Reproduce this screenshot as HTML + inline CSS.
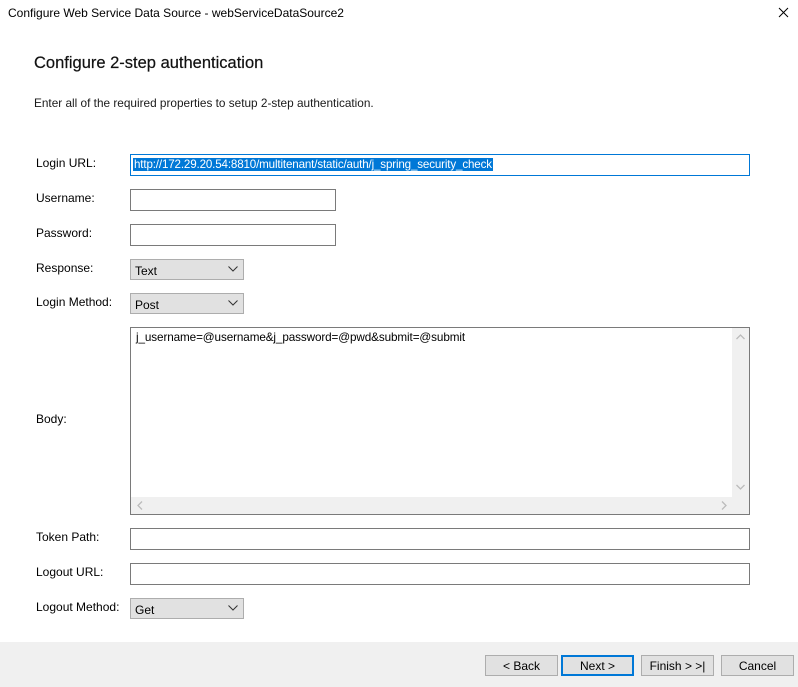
<!DOCTYPE html>
<html><head><style>
*{margin:0;padding:0;box-sizing:border-box}
body{width:798px;height:687px;background:#fff;font-family:"Liberation Sans",sans-serif;font-size:12px;color:#000;position:relative;overflow:hidden}
.a{position:absolute;white-space:nowrap}
.in{position:absolute;border:1px solid #7a7a7a;background:#fff}
.sel{position:absolute;border:1px solid #adadad;background:#e1e1e1;height:21px;width:114px;padding:4px 0 0 4px}
.sel svg{position:absolute;right:5px;top:6px}
.btn{position:absolute;top:655px;height:21px;width:73px;border:1px solid #adadad;background:#e1e1e1;text-align:center;line-height:21px}
</style></head><body>
<div class="a" style="left:8px;top:6px;font-size:12px">Configure Web Service Data Source - webServiceDataSource2</div>
<svg class="a" style="left:778px;top:7px" width="11" height="11"><path d="M1 1L10 10M10 1L1 10" stroke="#000" stroke-width="1"/></svg>
<div class="a" style="left:34px;top:54px;font-size:16.5px;color:#111;-webkit-text-stroke:0.2px #111">Configure 2-step authentication</div>
<div class="a" style="left:34px;top:96px;font-size:11.8px;color:#1a1a1a">Enter all of the required properties to setup 2-step authentication.</div>

<div class="a" style="left:36px;top:156px">Login URL:</div>
<div class="in" style="left:130px;top:154px;width:620px;height:22px;border-color:#0078d7"><span class="a" style="left:2px;top:3px;background:#0078d7;color:#fff;padding:0 1px;font-size:11.6px;letter-spacing:-0.15px">http://172.29.20.54:8810/multitenant/static/auth/j_spring_security_check</span></div>
<div class="a" style="left:36px;top:191px">Username:</div>
<div class="in" style="left:130px;top:189px;width:206px;height:22px"></div>
<div class="a" style="left:36px;top:226px">Password:</div>
<div class="in" style="left:130px;top:224px;width:206px;height:22px"></div>
<div class="a" style="left:36px;top:261px">Response:</div>
<div class="sel" style="left:130px;top:259px">Text<svg width="10" height="6"><path d="M0.5 0.5L5 5L9.5 0.5" stroke="#333" fill="none"/></svg></div>
<div class="a" style="left:36px;top:295px">Login Method:</div>
<div class="sel" style="left:130px;top:293px">Post<svg width="10" height="6"><path d="M0.5 0.5L5 5L9.5 0.5" stroke="#333" fill="none"/></svg></div>

<div class="a" style="left:36px;top:412px">Body:</div>
<div class="in" style="left:130px;top:327px;width:620px;height:188px">
<div class="a" style="left:5px;top:3px;font-size:11.7px;letter-spacing:-0.1px">j_username=@username&amp;j_password=@pwd&amp;submit=@submit</div>
<div class="a" style="left:601px;top:0;width:17px;height:169px;background:#f0f0f0"></div>
<div class="a" style="left:0;top:169px;width:618px;height:17px;background:#f0f0f0"></div>
<svg class="a" style="left:605px;top:6px" width="9" height="6"><path d="M0.5 5L4.5 1L8.5 5" stroke="#bbb" fill="none" stroke-width="1.3"/></svg>
<svg class="a" style="left:605px;top:156px" width="9" height="6"><path d="M0.5 1L4.5 5L8.5 1" stroke="#bbb" fill="none" stroke-width="1.3"/></svg>
<svg class="a" style="left:6px;top:173px" width="6" height="9"><path d="M5 0.5L1 4.5L5 8.5" stroke="#bbb" fill="none" stroke-width="1.3"/></svg>
<svg class="a" style="left:590px;top:173px" width="6" height="9"><path d="M1 0.5L5 4.5L1 8.5" stroke="#bbb" fill="none" stroke-width="1.3"/></svg>
</div>

<div class="a" style="left:36px;top:530px">Token Path:</div>
<div class="in" style="left:130px;top:528px;width:620px;height:22px"></div>
<div class="a" style="left:36px;top:565px">Logout URL:</div>
<div class="in" style="left:130px;top:563px;width:620px;height:22px"></div>
<div class="a" style="left:36px;top:600px">Logout Method:</div>
<div class="sel" style="left:130px;top:598px">Get<svg width="10" height="6"><path d="M0.5 0.5L5 5L9.5 0.5" stroke="#333" fill="none"/></svg></div>

<div class="a" style="left:0;top:642px;width:798px;height:45px;background:#f0f0f0"></div>
<div class="btn" style="left:485px">&lt; Back</div>
<div class="btn" style="left:561px;border:2px solid #0078d7;line-height:19px">Next &gt;</div>
<div class="btn" style="left:641px">Finish &gt; &gt;|</div>
<div class="btn" style="left:721px">Cancel</div>
</body></html>
